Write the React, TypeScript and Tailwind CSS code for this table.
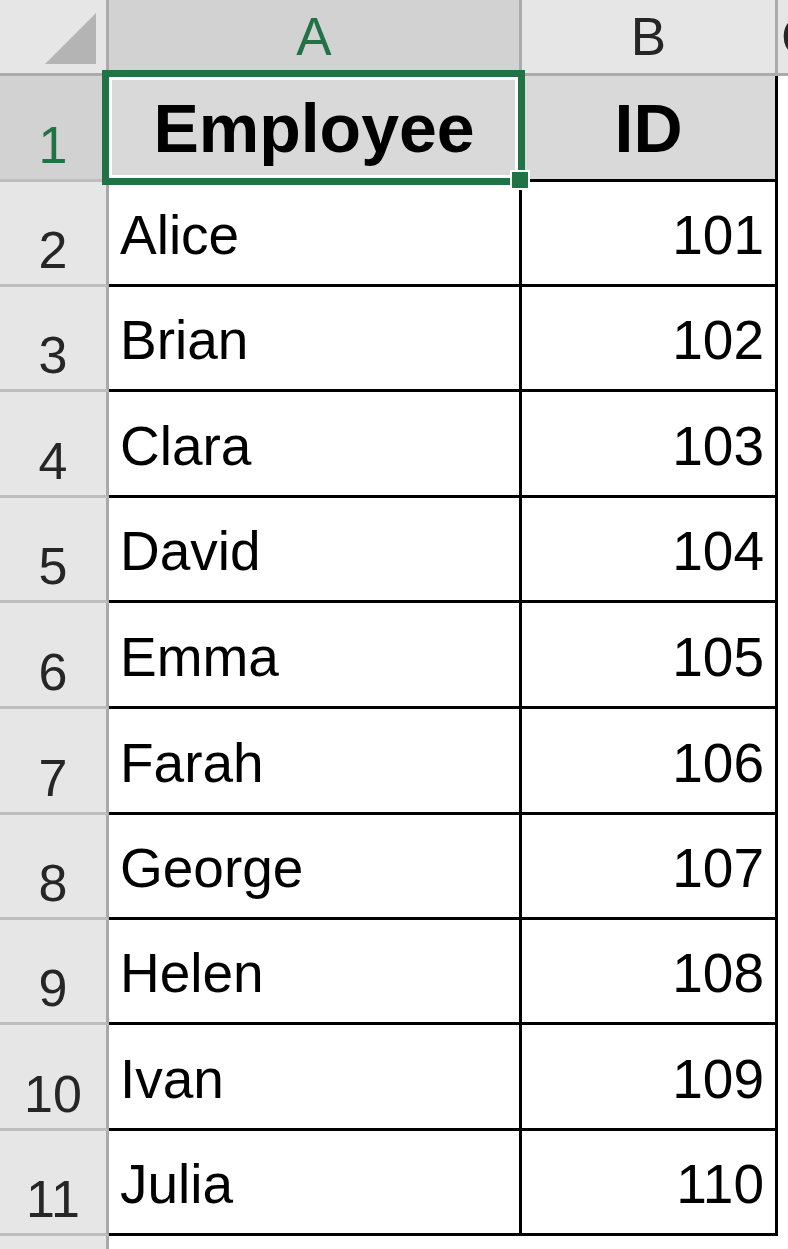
import React from 'react';

type Row = { n: number; name: string; id: string; tall: boolean };

const rows: Row[] = [
  { n: 2, name: 'Alice', id: '101', tall: false },
  { n: 3, name: 'Brian', id: '102', tall: false },
  { n: 4, name: 'Clara', id: '103', tall: true },
  { n: 5, name: 'David', id: '104', tall: false },
  { n: 6, name: 'Emma', id: '105', tall: true },
  { n: 7, name: 'Farah', id: '106', tall: true },
  { n: 8, name: 'George', id: '107', tall: false },
  { n: 9, name: 'Helen', id: '108', tall: false },
  { n: 10, name: 'Ivan', id: '109', tall: true },
  { n: 11, name: 'Julia', id: '110', tall: false },
];

function RowHeader({ n, selected }: { n: number | string; selected?: boolean }) {
  return (
    <div
      className={`w-[109px] shrink-0 flex items-end justify-center pb-[8px] text-[52px] leading-none border-r-[3px] border-r-[#a9a9a9] border-b-[3px] border-b-[#bdbdbd] ${
        selected ? 'bg-[#d2d2d2] text-[#217346]' : 'bg-[#e6e6e6] text-[#262626]'
      }`}
    >
      {n}
    </div>
  );
}

export default function App() {
  return (
    <div className="relative w-[788px] h-[1249px] overflow-hidden bg-white font-['Liberation_Sans',Arial,sans-serif] text-black">
      {/* column headers */}
      <div className="flex h-[76px] border-b-[3px] border-b-[#ababab]">
        <div className="w-[109px] shrink-0 bg-[#e6e6e6] border-r-[3px] border-r-[#ababab] relative">
          <svg className="absolute left-[45px] top-[13px]" width="51" height="51" viewBox="0 0 51 51">
            <polygon points="51,0 51,51 0,51" fill="#b4b4b4" />
          </svg>
        </div>
        <div className="w-[413px] shrink-0 bg-[#d2d2d2] border-r-[3px] border-r-[#ababab] flex items-center justify-center text-[53px] leading-none text-[#217346]">
          A
        </div>
        <div className="w-[256px] shrink-0 bg-[#e6e6e6] border-r-[3px] border-r-[#ababab] flex items-center justify-center text-[53px] leading-none text-[#262626]">
          B
        </div>
        <div className="flex-1 bg-[#e6e6e6] overflow-hidden flex items-center pl-[3px] text-[53px] leading-none text-[#262626]">
          C
        </div>
      </div>

      {/* header row */}
      <div className="flex h-[106px]">
        <RowHeader n={1} selected />
        <div className="w-[413px] shrink-0 bg-[#d9d9d9] border-r-[3px] border-b-[3px] border-black flex items-center justify-center text-[68px] font-bold leading-none">
          Employee
        </div>
        <div className="w-[256px] shrink-0 bg-[#d9d9d9] border-r-[3px] border-b-[3px] border-black flex items-center justify-center text-[68px] font-bold leading-none">
          ID
        </div>
        <div className="flex-1 bg-white" />
      </div>

      {rows.map((r) => (
        <div key={r.n} className={`flex ${r.tall ? 'h-[106px]' : 'h-[105px]'}`}>
          <RowHeader n={r.n} />
          <div className="w-[413px] shrink-0 border-r-[3px] border-b-[3px] border-black flex items-center pl-[11px] pt-[5px] text-[55px] leading-none">
            {r.name}
          </div>
          <div className="w-[256px] shrink-0 border-r-[3px] border-b-[3px] border-black flex items-center justify-end pr-[11px] pt-[5px] text-[55px] leading-none">
            {r.id}
          </div>
          <div className="flex-1 bg-white" />
        </div>
      ))}

      {/* row 12 */}
      <div className="flex h-[40px]">
        <RowHeader n="" />
        <div className="flex-1 bg-white" />
      </div>

      {/* selection of A1 */}
      <div className="absolute left-[102px] top-[70px] w-[423px] h-[115px] border-[7px] border-[#217346]">
        <div className="w-full h-full border-[3px] border-white" />
      </div>
      <div className="absolute left-[510px] top-[170px] w-[20px] h-[20px] border-2 border-white bg-[#217346]" />
    </div>
  );
}
